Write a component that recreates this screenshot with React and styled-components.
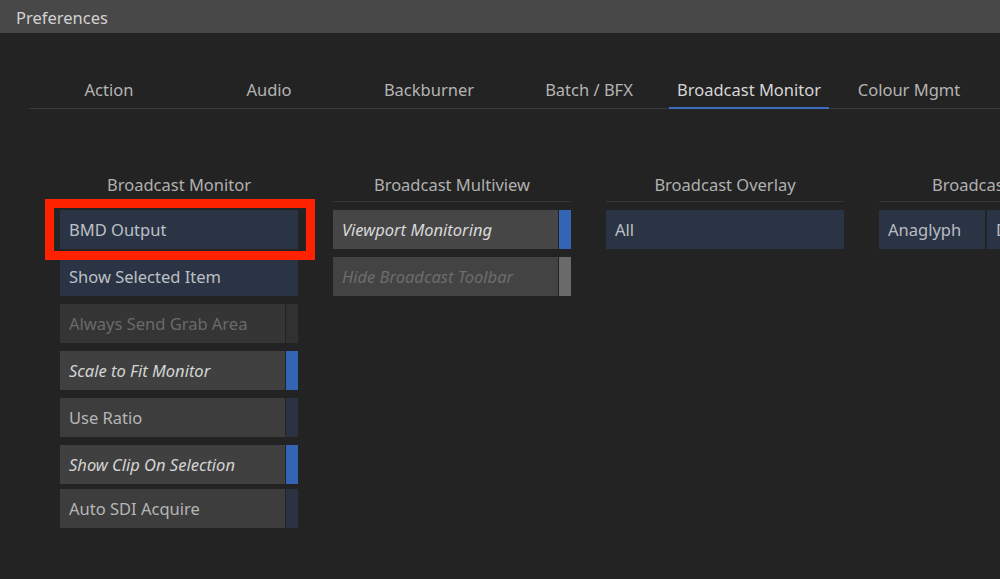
import React from "react";
import styled, { createGlobalStyle, css } from "styled-components";

const Global = createGlobalStyle`
  html, body { margin: 0; padding: 0; background: #232323; overflow: hidden; }
  body { font-family: "Noto Sans", "Open Sans", sans-serif; width: 1000px; height: 579px; }
  * { box-sizing: border-box; }
`;

const Page = styled.div`
  width: 1000px;
  height: 579px;
  background: #232323;
  overflow: hidden;
`;

const TitleBar = styled.div`
  height: 33px;
  background: #484848;
  color: #d2d2d2;
  font-size: 16.5px;
  line-height: 30px;
  padding: 3px 0 0 16px;
`;

const TabBar = styled.div`
  display: flex;
  margin: 38px 0 0 29px;
  border-bottom: 1px solid #3a3a3a;
`;

const Tab = styled.div`
  flex: 0 0 160px;
  height: 38px;
  line-height: 38px;
  text-align: center;
  font-size: 16.5px;
  color: ${(p) => (p.$active ? "#d6d6d6" : "#b4b4b4")};
  margin-bottom: -1px;
  border-bottom: 2px solid ${(p) => (p.$active ? "#3b6cc0" : "transparent")};
  white-space: nowrap;
`;

const Columns = styled.div`
  display: flex;
  gap: 35px;
  margin: 62px 0 0 60px;
`;

const Column = styled.div`
  flex: 0 0 238px;
  display: flex;
  flex-direction: column;
`;

const Header = styled.div`
  height: 31px;
  line-height: 28px;
  text-align: center;
  font-size: 16.5px;
  color: #b0b0b0;
  border-bottom: 1px solid #363636;
  white-space: nowrap;
  margin-bottom: 8px;
`;

const List = styled.div`
  display: flex;
  flex-direction: column;
`;

const Item = styled.div`
  position: relative;
  height: 39px;
  display: flex;
  margin-top: ${(p) => (p.$tight ? "5px" : p.$first ? "0" : "8px")};
  ${(p) =>
    p.$marked &&
    css`
      &::after {
        content: "";
        position: absolute;
        left: -15px;
        right: -17px;
        top: -11px;
        bottom: -11px;
        border: 9px solid #ff2200;
        pointer-events: none;
        z-index: 2;
      }
    `}
`;

const Label = styled.div`
  flex: 1;
  display: flex;
  align-items: center;
  padding-left: 9px;
  font-size: 16.5px;
  white-space: nowrap;
  overflow: hidden;
  background: ${(p) => p.$bg};
  color: ${(p) => p.$color};
  font-style: ${(p) => (p.$italic ? "italic" : "normal")};
`;

const Strip = styled.div`
  flex: 0 0 12px;
  margin-left: 1px;
  background: ${(p) => p.$color};
`;

const Segments = styled.div`
  display: flex;
  gap: 2px;
  height: 39px;
`;

const Segment = styled.div`
  flex: 0 0 106px;
  display: flex;
  align-items: center;
  padding-left: 9px;
  font-size: 16.5px;
  color: #b8bcc4;
  background: #2b3444;
  white-space: nowrap;
`;

const LIST_BG = "#2b3444";
const LIST_FG = "#bcc0c6";

function ListItem({ label, first, marked }) {
  return (
    <Item $first={first} $marked={marked}>
      <Label $bg={LIST_BG} $color={LIST_FG}>{label}</Label>
    </Item>
  );
}

const toggleStyles = {
  on: { bg: "#404040", fg: "#d4d4d4", strip: "#3465b4", italic: true },
  off: { bg: "#3d3d3d", fg: "#b6b6b6", strip: "#2b3343", italic: false },
  disabled: { bg: "#353535", fg: "#6a6a6a", strip: "#313131", italic: false },
  disabledOn: { bg: "#434343", fg: "#6c6c6c", strip: "#6a6a6a", italic: true },
  onLight: { bg: "#464646", fg: "#d8d8d8", strip: "#3465b4", italic: true },
};

function Toggle({ label, state, first, tight }) {
  const s = toggleStyles[state];
  return (
    <Item $first={first} $tight={tight}>
      <Label $bg={s.bg} $color={s.fg} $italic={s.italic}>{label}</Label>
      <Strip $color={s.strip} />
    </Item>
  );
}

const tabs = ["Action", "Audio", "Backburner", "Batch / BFX", "Broadcast Monitor", "Colour Mgmt"];

export default function App() {
  return (
    <Page>
      <Global />
      <TitleBar>Preferences</TitleBar>
      <TabBar>
        {tabs.map((t) => (
          <Tab key={t} $active={t === "Broadcast Monitor"}>{t}</Tab>
        ))}
      </TabBar>
      <Columns>
        <Column>
          <Header>Broadcast Monitor</Header>
          <List>
            <ListItem label="BMD Output" first marked />
            <ListItem label="Show Selected Item" />
            <Toggle label="Always Send Grab Area" state="disabled" />
            <Toggle label="Scale to Fit Monitor" state="on" />
            <Toggle label="Use Ratio" state="off" />
            <Toggle label="Show Clip On Selection" state="on" />
            <Toggle label="Auto SDI Acquire" state="off" tight />
          </List>
        </Column>
        <Column>
          <Header>Broadcast Multiview</Header>
          <List>
            <Toggle label="Viewport Monitoring" state="onLight" first />
            <Toggle label="Hide Broadcast Toolbar" state="disabledOn" />
          </List>
        </Column>
        <Column>
          <Header>Broadcast Overlay</Header>
          <List>
            <ListItem label="All" first />
          </List>
        </Column>
        <Column>
          <Header>Broadcast Stereo</Header>
          <Segments>
            <Segment>Anaglyph</Segment>
            <Segment>Dual</Segment>
          </Segments>
        </Column>
      </Columns>
    </Page>
  );
}
